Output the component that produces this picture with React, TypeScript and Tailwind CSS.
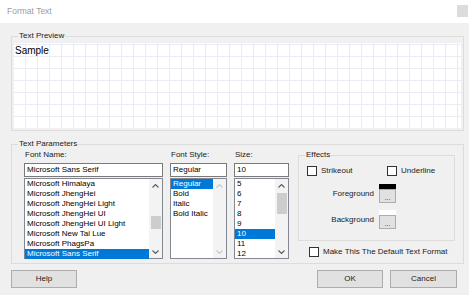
import React from 'react'

const fontNames = [
  'Microsoft Himalaya',
  'Microsoft JhengHei',
  'Microsoft JhengHei Light',
  'Microsoft JhengHei UI',
  'Microsoft JhengHei UI Light',
  'Microsoft New Tai Lue',
  'Microsoft PhagsPa',
  'Microsoft Sans Serif',
]
const fontStyles = ['Regular', 'Bold', 'Italic', 'Bold Italic']
const fontSizes = ['5', '6', '7', '8', '9', '10', '11', '12']

function Chevron({ down, off }: { down?: boolean; off?: boolean }) {
  return (
    <svg width="7" height="4" viewBox="0 0 7 4" className="block">
      <polyline
        points={down ? '0.5,0.5 3.5,3.5 6.5,0.5' : '0.5,3.5 3.5,0.5 6.5,3.5'}
        fill="none"
        stroke={off ? '#c8c8c8' : '#5a5a5a'}
        strokeWidth="1.1"
      />
    </svg>
  )
}

function ScrollBar({ thumb, off }: { thumb?: string; off?: boolean }) {
  return (
    <div className="w-[13px] h-full bg-[#f3f3f3] flex flex-col items-center">
      <div className="h-[13px] flex items-center justify-center">
        <Chevron off={off} />
      </div>
      {thumb && <div className={`w-[10px] bg-[#cdcdcd] ${thumb}`} />}
      <div className="flex-1" />
      <div className="h-[13px] flex items-center justify-center">
        <Chevron down off={off} />
      </div>
    </div>
  )
}

function ListBox({
  items, selected, width, thumb, off,
}: {
  items: string[]
  selected: number
  width: string
  thumb?: string
  off?: boolean
}) {
  return (
    <div className={`mt-px h-[81px] border border-[#828790] bg-white flex ${width}`}>
      <div className="flex-1 min-w-0">
        {items.map((t, i) => (
          <div
            key={t}
            className={`h-[10px] leading-[10px] pl-[2px] whitespace-nowrap overflow-hidden ${i === selected ? 'bg-[#0078d7] text-white' : 'text-black'}`}
          >
            {t}
          </div>
        ))}
      </div>
      <ScrollBar thumb={thumb} off={off} />
    </div>
  )
}

function Column({ label, value, children, width }: { label: string; value: string; children: React.ReactNode; width: string }) {
  return (
    <div className={`flex flex-col ${width}`}>
      <div className="h-[10px] leading-[10px] pl-px text-[#222]">{label}</div>
      <div className="mt-[3px] h-[14px] border border-[#7a7a7a] bg-white pl-[2px] leading-[12px] text-black whitespace-nowrap">
        {value}
      </div>
      {children}
    </div>
  )
}

function CheckBox({ label }: { label: string }) {
  return (
    <div className="flex items-center">
      <div className="w-[10px] h-[10px] border border-[#333] bg-white" />
      <span className="ml-[4px] leading-[10px] text-[#222]">{label}</span>
    </div>
  )
}

function ColorPick({ label, swatch }: { label: string; swatch: string }) {
  return (
    <div className="flex items-center">
      <div className="w-[75px] text-right leading-[10px] text-[#222]">{label}</div>
      <div className="ml-[5px] w-[17px] flex flex-col">
        <div className={`h-[5px] ${swatch}`} />
        <div className="h-[14px] bg-[#e1e1e1] border border-[#adadad] flex items-end justify-center leading-[8px] text-[7px] text-[#333]">
          ...
        </div>
      </div>
    </div>
  )
}

function DlgButton({ label, width }: { label: string; width: string }) {
  return (
    <button className={`h-[18px] bg-[#e1e1e1] border border-[#adadad] text-[#222] leading-[16px] ${width}`}>
      {label}
    </button>
  )
}

export default function App() {
  return (
    <div className="w-[474px] h-[297px] overflow-hidden bg-white flex flex-col font-['Liberation_Sans',Arial,sans-serif] text-[8px]">

      {/* TITLE BAR */}
      <div className="h-[23px] flex items-center justify-between pl-[7px] pr-[6px]">
        <span className="text-[8.5px] text-[#9c9c9c]">Format Text</span>
        <div className="w-[11px] h-[12px] bg-[#dcdcdc] mb-[2px]" />
      </div>

      {/* BODY */}
      <div className="w-[469px] h-[272px] bg-[#f0f0f0] pl-[11px] pr-[5px] pt-[8px] flex flex-col">

        {/* TEXT PREVIEW */}
        <fieldset className="border border-[#dcdcdc] p-0 pb-[2px]">
          <legend className="ml-[6px] px-px leading-[10px] text-[#222]">Text Preview</legend>
          <div className="mt-[2px] mx-[2px] h-[85px] bg-white bg-[linear-gradient(to_right,#ebebf6_1px,transparent_1px),linear-gradient(to_bottom,#ebebf6_1px,transparent_1px)] bg-size-[12px_12px] bg-position-[11px_1px] pt-[2px] pl-px">
            <span className="text-[10px] leading-[12px] text-black">Sample</span>
          </div>
        </fieldset>

        {/* TEXT PARAMETERS */}
        <fieldset className="mt-[8px] border border-[#dcdcdc] p-0">
          <legend className="ml-[6px] px-px leading-[10px] text-[#222]">Text Parameters</legend>
          <div className="pl-[12px] pt-px pb-[4px] flex">
            <Column label="Font Name:" value="Microsoft Sans Serif" width="w-[139px]">
              <ListBox items={fontNames} selected={7} width="w-[139px]" thumb="mt-[24px] h-[13px]" />
            </Column>
            <div className="ml-[7px]">
              <Column label="Font Style:" value="Regular" width="w-[57px]">
                <ListBox items={fontStyles} selected={0} width="w-[57px]" off />
              </Column>
            </div>
            <div className="ml-[7px]">
              <Column label="Size:" value="10" width="w-[55px]">
                <ListBox items={fontSizes} selected={5} width="w-[55px]" thumb="mt-px h-[21px]" />
              </Column>
            </div>

            {/* EFFECTS */}
            <div className="ml-[9px] w-[157px] flex flex-col">
              <fieldset className="border border-[#dcdcdc] p-0 pb-[11px]">
                <legend className="ml-[6px] px-px leading-[10px] text-[#222]">Effects</legend>
                <div className="mt-[6px] ml-[8px] flex">
                  <div className="w-[80px]">
                    <CheckBox label="Strikeout" />
                  </div>
                  <CheckBox label="Underline" />
                </div>
                <div className="mt-[8px]">
                  <ColorPick label="Foreground" swatch="bg-black" />
                </div>
                <div className="mt-[7px]">
                  <ColorPick label="Background" swatch="bg-white" />
                </div>
              </fieldset>
              <div className="mt-[6px] ml-[11px]">
                <CheckBox label="Make This The Default Text Format" />
              </div>
            </div>
          </div>
        </fieldset>

        {/* BUTTONS */}
        <div className="mt-[6px] flex">
          <DlgButton label="Help" width="w-[66px]" />
          <div className="flex-1" />
          <DlgButton label="OK" width="w-[66px]" />
          <div className="ml-[7px] mr-[7px]">
            <DlgButton label="Cancel" width="w-[67px]" />
          </div>
        </div>
      </div>
    </div>
  )
}
